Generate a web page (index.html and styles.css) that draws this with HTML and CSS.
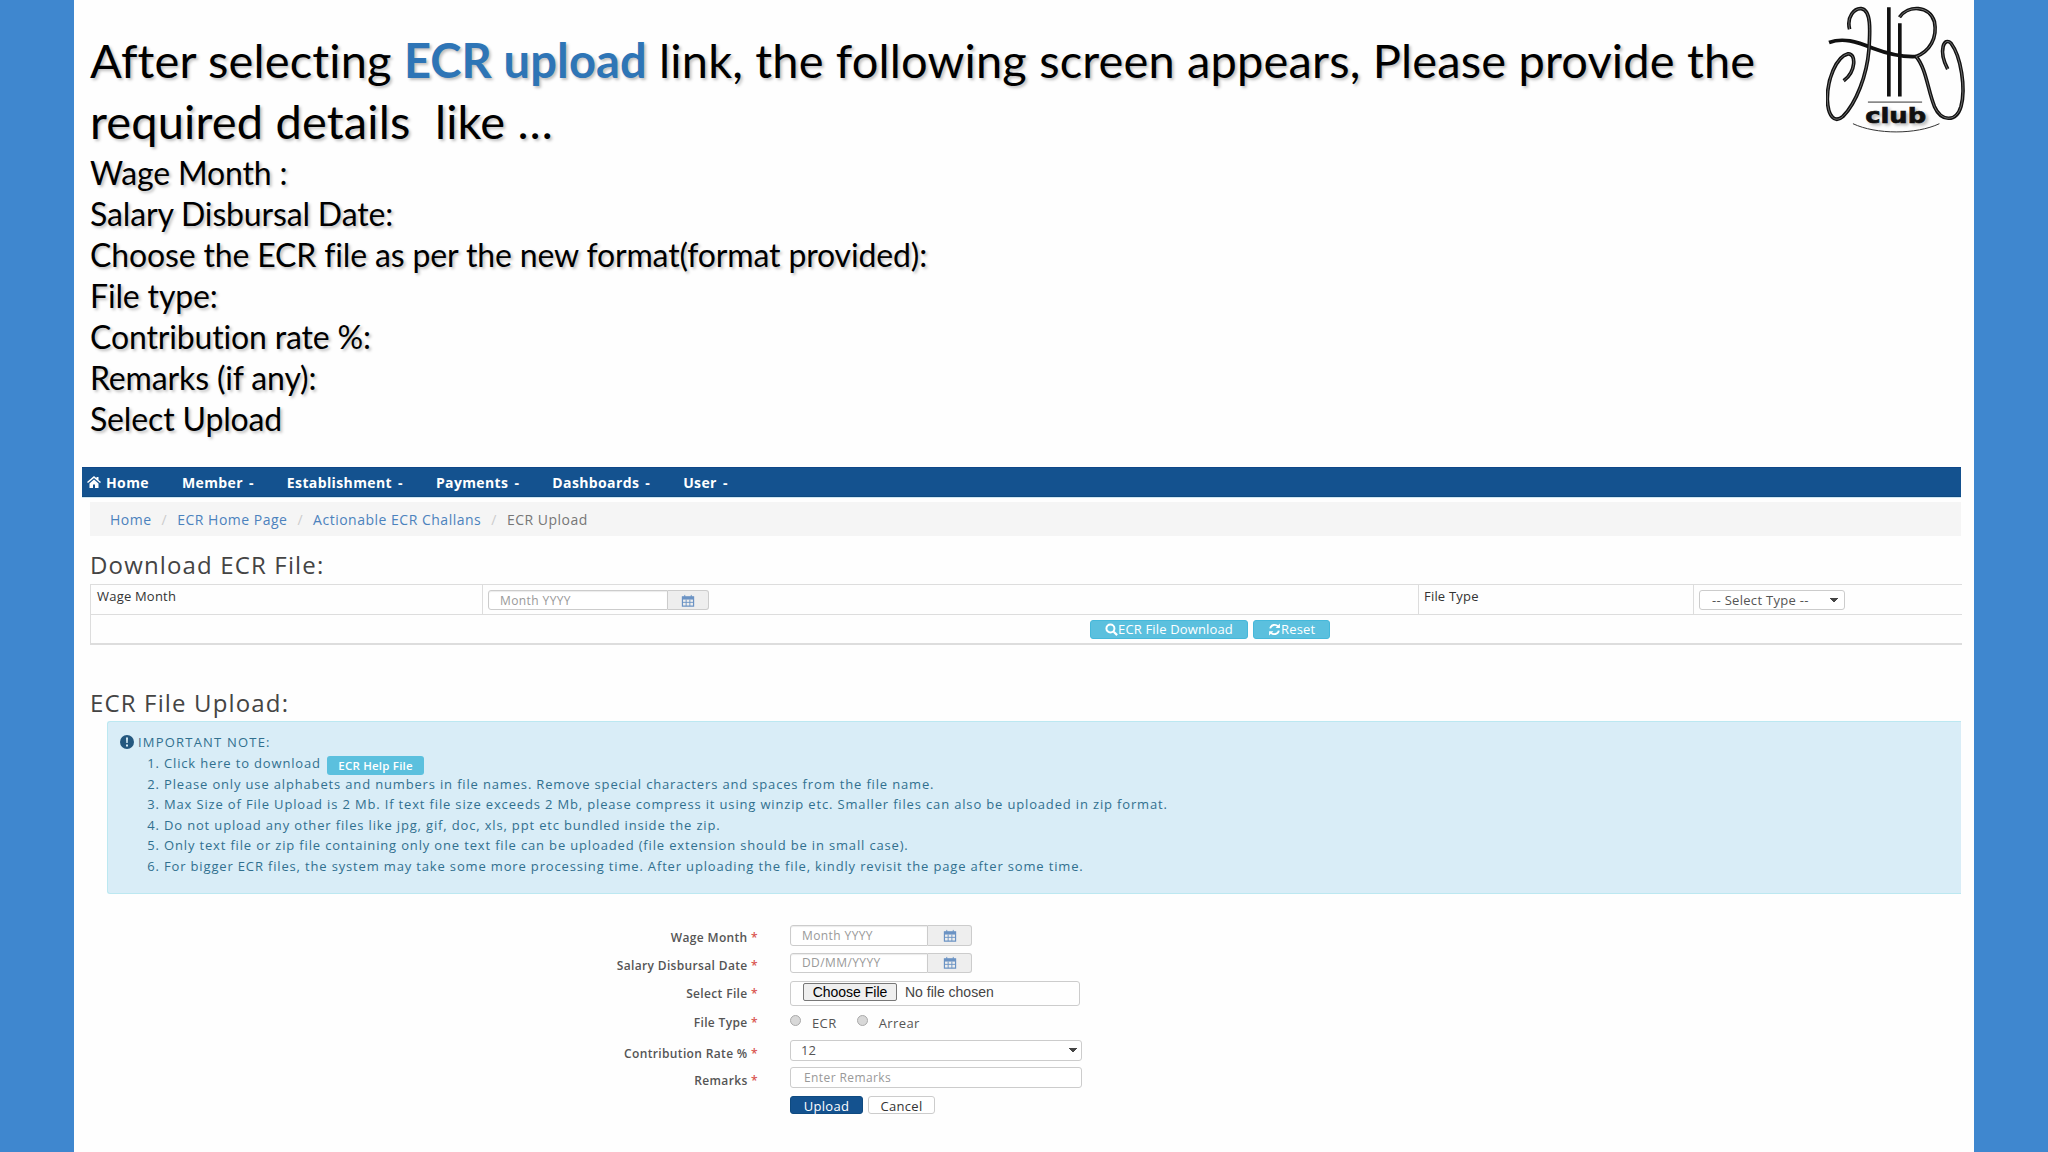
FILE: index.html
```html
<!DOCTYPE html>
<html lang="en">
<head>
  <meta charset="UTF-8" />
  <meta name="viewport" content="width=device-width, initial-scale=1.0" />
  <title>ECR upload</title>
  <link rel="stylesheet" href="styles.css">
</head>
<body>
  <svg class="sprite" width="0" height="0">
    <symbol id="cal" viewBox="0 0 14 14">
      <path d="M1 3h12v10H1z" fill="none" stroke="currentColor" stroke-width="1.3"/>
      <path d="M1 3h12v3H1z" fill="currentColor"/>
      <path d="M3.500 1v3M10.500 1v3M1 9h12M5 6v7M9 6v7" fill="none" stroke="currentColor"/>
    </symbol>
  </svg>

  <main class="slide">
    <section class="intro">
      <h1>After selecting <span class="accent">ECR upload</span> link, the following screen appears, Please provide the<br>required details&nbsp; like …</h1>
      <ul class="steps">
        <li>Wage Month :</li>
        <li>Salary Disbursal Date:</li>
        <li>Choose the ECR file as per the new format(format provided):</li>
        <li>File type:</li>
        <li>Contribution rate %:</li>
        <li>Remarks (if any):</li>
        <li>Select Upload</li>
      </ul>
      <svg class="logo" viewBox="380 15 425 385" aria-label="HR club logo">
        <g class="logo-ink">
          <path d="M450 88C440 50 465 24 485 26C515 30 512 90 508 150C502 225 470 310 430 350C405 372 385 350 383 300C382 240 410 170 445 162C470 160 470 215 432 243"/>
          <path d="M388 128C430 112 470 125 520 145C565 162 610 172 650 170"/>
          <path d="M600 52C625 15 690 15 705 65C715 115 690 155 650 170C680 205 685 270 705 320C725 365 770 370 785 320C800 265 785 170 755 130C735 110 715 150 745 208"/>
        </g>
        <g class="logo-shine">
          <path d="M450 88C440 50 465 24 485 26C515 30 512 90 508 150C502 225 470 310 430 350C405 372 385 350 383 300C382 240 410 170 445 162C470 160 470 215 432 243"/>
          <path d="M600 52C625 15 690 15 705 65C715 115 690 155 650 170C680 205 685 270 705 320C725 365 770 370 785 320C800 265 785 170 755 130C735 110 715 150 745 208"/>
        </g>
        <path class="logo-bar" d="M568 22V290M601 70V290"/>
        <path class="logo-thin" d="M505 307H668M460 372C530 405 650 405 720 372"/>
        <text class="logo-club" x="497" y="370" textLength="183" lengthAdjust="spacingAndGlyphs">club</text>
      </svg>
    </section>

    <nav class="topnav">
      <a href="#" class="nav-home">
        <svg class="ico-home" viewBox="0 0 14 12"><path d="M7 0L0 6l1 1 6-5 6 5 1-1-2.500-2V1h-2v1.200zM2.500 7.500V12H6V8.500h2V12h3.500V7.500L7 3.500z" fill="currentColor"/></svg>
        Home
      </a>
      <a href="#">Member <i>-</i></a>
      <a href="#">Establishment <i>-</i></a>
      <a href="#">Payments <i>-</i></a>
      <a href="#">Dashboards <i>-</i></a>
      <a href="#">User <i>-</i></a>
    </nav>

    <div class="crumbs">
      <a href="#">Home</a><span>/</span>
      <a href="#">ECR Home Page</a><span>/</span>
      <a href="#">Actionable ECR Challans</a><span>/</span>
      <b>ECR Upload</b>
    </div>

    <h2 class="head-download">Download ECR File:</h2>
    <table class="dl-table">
      <tr class="dl-row">
        <td class="c1">Wage Month</td>
        <td class="c2">
          <div class="group g-wide">
            <input type="text" placeholder="Month YYYY">
            <span class="addon"><svg class="ico-cal"><use href="#cal"/></svg></span>
          </div>
        </td>
        <td class="c3">File Type</td>
        <td class="c4">
          <select class="type-select"><option>-- Select Type --</option></select>
        </td>
      </tr>
      <tr>
        <td colspan="4" class="dl-actions">
          <button class="btn-info btn-dl">
            <svg class="ico-btn" viewBox="0 0 12 12"><circle cx="5" cy="5" r="3.700" fill="none" stroke="currentColor" stroke-width="1.800"/><path d="M8 8l3.200 3.200" stroke="currentColor" stroke-width="2"/></svg>ECR File Download
          </button>
          <button class="btn-info btn-reset">
            <svg class="ico-btn" viewBox="0 0 12 12"><path d="M2 5a4.200 4.200 0 0 1 7.300-1.800M10 7a4.200 4.200 0 0 1-7.300 1.800" fill="none" stroke="currentColor" stroke-width="1.700"/><path d="M11 0.500v4H7zM1 11.500v-4h4z" fill="currentColor"/></svg>Reset
          </button>
        </td>
      </tr>
    </table>

    <h2 class="head-upload">ECR File Upload:</h2>
    <div class="note">
      <p class="note-title">
        <svg class="ico-note" viewBox="0 0 14 14"><circle cx="7" cy="7" r="7" fill="#24587f"/><path d="M6 2.500h2l-.3 5.500H6.300zM6 9.500h2V11.500H6z" fill="#d9edf7"/></svg>
        IMPORTANT NOTE:
      </p>
      <ol>
        <li class="first">Click here to download <a class="help-btn" href="#">ECR Help File</a></li>
        <li>Please only use alphabets and numbers in file names. Remove special characters and spaces from the file name.</li>
        <li>Max Size of File Upload is 2 Mb. If text file size exceeds 2 Mb, please compress it using winzip etc. Smaller files can also be uploaded in zip format.</li>
        <li>Do not upload any other files like jpg, gif, doc, xls, ppt etc bundled inside the zip.</li>
        <li>Only text file or zip file containing only one text file can be uploaded (file extension should be in small case).</li>
        <li>For bigger ECR files, the system may take some more processing time. After uploading the file, kindly revisit the page after some time.</li>
      </ol>
    </div>

    <form class="upload-form">
      <div class="row r1">
        <label>Wage Month <em>*</em></label>
        <div class="group g-form">
          <input type="text" placeholder="Month YYYY">
          <span class="addon"><svg class="ico-cal"><use href="#cal"/></svg></span>
        </div>
      </div>
      <div class="row r2">
        <label>Salary Disbursal Date <em>*</em></label>
        <div class="group g-form">
          <input type="text" placeholder="DD/MM/YYYY">
          <span class="addon"><svg class="ico-cal"><use href="#cal"/></svg></span>
        </div>
      </div>
      <div class="row r3">
        <label>Select File <em>*</em></label>
        <div class="file-box"><input type="file"></div>
      </div>
      <div class="row r4">
        <label>File Type <em>*</em></label>
        <div class="radios">
          <input type="radio" name="ftype" id="ft-ecr"><span>ECR</span>
          <input type="radio" name="ftype" id="ft-arr"><span>Arrear</span>
        </div>
      </div>
      <div class="row r5">
        <label>Contribution Rate % <em>*</em></label>
        <select class="rate-select"><option>12</option></select>
      </div>
      <div class="row r6">
        <label>Remarks <em>*</em></label>
        <input class="remarks" type="text" placeholder="Enter Remarks">
      </div>
      <div class="row r7">
        <label></label>
        <div class="actions">
          <button class="btn-upload" type="button">Upload</button>
          <button class="btn-cancel" type="button">Cancel</button>
        </div>
      </div>
    </form>
  </main>
</body>
</html>
```

FILE: styles.css
```css
* {
  box-sizing: border-box;
}
html, body {
  height: 1152px;
  overflow: hidden;
}
body {
  margin: 0;
  background: #3f87cf;
  font-family: "Open Sans", sans-serif;
  color: #333;
}
.sprite {
  position: absolute;
}
.slide {
  width: 1900px;
  height: 1152px;
  margin-left: 74px;
  padding: 30px 13px 0 8px;
  background: #fefefe;
}

/* slide text */
.intro {
  position: relative;
  padding-left: 8px;
  font-family: Lato, sans-serif;
  color: #000;
  text-shadow: 2px 2px 3px rgba(0, 0, 0, .25);
}
h1 {
  margin: 0;
  font-size: 47px;
  font-weight: 400;
  line-height: 61px;
  letter-spacing: .16px;
}
.accent {
  color: #2e75b6;
  font-weight: 700;
}
.steps {
  list-style: none;
  margin: 0;
  padding: 0;
  font-size: 32px;
  line-height: 41px;
  letter-spacing: -.15px;
}
.logo {
  position: absolute;
  top: -25px;
  right: -7px;
  width: 142px;
  height: 128px;
}
.logo-ink path {
  fill: none;
  stroke: #111;
  stroke-width: 11;
}
.logo-shine path {
  fill: none;
  stroke: #fff;
  stroke-width: 1.200;
}
.logo-bar {
  fill: none;
  stroke: #111;
  stroke-width: 11;
}
.logo-thin {
  fill: none;
  stroke: #333;
  stroke-width: 3;
}
.logo-club {
  font-family: "DejaVu Sans", sans-serif;
  font-size: 62px;
  font-weight: 700;
  fill: #111;
  stroke: #111;
  stroke-width: 2;
}

/* screenshot of the portal */
.topnav {
  display: flex;
  gap: 33px;
  align-items: center;
  height: 30px;
  margin-top: 28px;
  padding-left: 5px;
  background: #14528f;
  border-top: 1px solid #0f4788;
  border-bottom: 1px solid #0f4a80;
  box-shadow: 0 1px 0 #cfe6f2;
}
.topnav a {
  color: #fff;
  font-size: 14px;
  font-weight: 700;
  text-decoration: none;
  letter-spacing: .38px;
}
.topnav i {
  font-style: normal;
  margin-left: 2px;
}
.nav-home {
  display: flex;
  align-items: center;
  gap: 5px;
}
.ico-home {
  width: 14px;
  height: 12px;
}
.crumbs {
  display: flex;
  align-items: center;
  height: 34px;
  margin: 5px 0 0 8px;
  padding-left: 20px;
  background: #f5f5f5;
  font-size: 14px;
  letter-spacing: .5px;
  color: #777;
}
.crumbs a {
  color: #4c82bd;
  text-decoration: none;
}
.crumbs span {
  margin: 0 10px;
  color: #ccc;
}
.crumbs b {
  font-weight: 400;
}
h2 {
  margin: 0 0 0 8px;
  font-size: 24px;
  font-weight: 400;
  letter-spacing: 1.150px;
  color: #444;
  line-height: 28px;
}
.head-download {
  margin-top: 15px;
}
.head-upload {
  margin-top: 44px;
}
.dl-table {
  width: 1872px;
  margin: 5px 0 0 8px;
  border-collapse: collapse;
  table-layout: fixed;
  font-size: 13px;
  letter-spacing: .2px;
}
.dl-table td {
  border-top: 1px solid #ddd;
  padding: 0;
  height: 30px;
}
.dl-table tr:last-child td {
  border-bottom: 2px solid #ddd;
  height: 29px;
}
.dl-row td {
  vertical-align: top;
}
.c1 {
  width: 392px;
  padding: 2px 0 0 6px !important;
  border-left: 1px solid #ddd;
}
.c2 {
  width: 936px;
  border-left: 1px solid #ddd;
  padding: 5px 0 0 5px !important;
}
.c3 {
  width: 275px;
  border-left: 1px solid #ddd;
  padding: 2px 0 0 5px !important;
}
.c4 {
  border-left: 1px solid #ddd;
  padding: 5px 0 0 5px !important;
}
.dl-actions {
  border-left: 1px solid #ddd;
  padding: 1px 0 0 999px !important;
  font-size: 0;
}
.group {
  display: flex;
}
.group input {
  min-width: 0;
  flex: 1;
  border: 1px solid #ccc;
  border-radius: 3px 0 0 3px;
  padding: 0 11px;
  font: 12px "Open Sans", sans-serif;
  letter-spacing: .4px;
  box-shadow: inset 0 1px 1px rgba(0, 0, 0, .08);
}
input::placeholder {
  color: #999;
}
.addon {
  display: flex;
  align-items: center;
  justify-content: center;
  width: 41px;
  background: #eee;
  border: 1px solid #ccc;
  border-left: 0;
  border-radius: 0 3px 3px 0;
  color: #6b93c4;
}
.g-wide {
  width: 221px;
  height: 20px;
}
.g-form {
  width: 182px;
  height: 21px;
}
.g-form .addon {
  width: 44px;
}
.ico-cal {
  width: 14px;
  height: 13px;
}
/* small native-looking arrow, drawn with two gradients */
.type-select, .rate-select {
  appearance: none;
  background-color: #fff;
  background-repeat: no-repeat;
  background-size: 4px 5px, 4px 5px;
  background-image: linear-gradient(45deg, transparent 50%, #444 50%), linear-gradient(-45deg, transparent 50%, #444 50%);
}
.type-select {
  width: 146px;
  height: 20px;
  padding: 0 12px;
  background-position: right 10px center, right 6px center;
  border: 1px solid #ccc;
  border-radius: 3px;
  font: 13px "Open Sans", sans-serif;
  letter-spacing: .3px;
  color: #555;
}
.btn-info {
  display: inline-flex;
  align-items: center;
  justify-content: center;
  height: 19px;
  padding: 0;
  background: #5bc0de;
  border: 1px solid #46b8da;
  border-radius: 3px;
  color: #fff;
  font: 13px "Open Sans", sans-serif;
  letter-spacing: .15px;
}
.btn-dl {
  width: 158px;
}
.btn-reset {
  width: 77px;
  margin-left: 5px;
}
.ico-btn {
  width: 13px;
  height: 13px;
  margin-right: 0;
}

/* note box */
.note {
  height: 173px;
  margin: 4px 0 0 25px;
  padding: 12px 0 0 12px;
  background: #d9edf7;
  border: 1px solid #bce8f1;
  border-right: 0;
  border-radius: 3px 0 0 3px;
  color: #31708f;
  font-size: 13px;
  letter-spacing: .84px;
}
.note-title {
  display: flex;
  align-items: center;
  gap: 4px;
  margin: 0;
  line-height: 16px;
  letter-spacing: 1.200px;
}
.ico-note {
  width: 14px;
  height: 14px;
}
.note ol {
  margin: 2px 0 0;
  padding: 0 0 0 44px;
}
.note li {
  height: 20.600px;
  line-height: 20.600px;
  padding-left: 0;
}
.note li.first {
  height: 22px;
  line-height: 22px;
}
.help-btn {
  display: inline-block;
  height: 19px;
  width: 97px;
  margin-left: 2px;
  background: #5bc0de;
  border-radius: 3px;
  color: #fff;
  font-size: 11.500px;
  letter-spacing: .2px;
  font-weight: 600;
  line-height: 20px;
  text-align: center;
  text-decoration: none;
  vertical-align: -2px;
}

/* upload form */
.upload-form {
  display: flex;
  flex-direction: column;
  gap: 7px;
  margin-top: 31px;
  font-size: 12px;
}
.row {
  display: grid;
  grid-template-columns: 676px auto;
  column-gap: 32px;
  align-items: start;
}
.row label {
  text-align: right;
  font-weight: 600;
  font-size: 12px;
  line-height: 14px;
  letter-spacing: .35px;
  color: #555;
}
.row em {
  color: #d9534f;
  font-style: normal;
}
.r1 label {
  padding-top: 6px;
}
.r2 label {
  padding-top: 6px;
}
.r3 {
  margin-top: 1px;
}
.r3 label {
  padding-top: 6px;
}
.r4 label {
  padding-top: 3px;
}
.r5 label {
  padding-top: 7px;
}
.r6 label {
  padding-top: 7px;
}
.r2 .group {
  height: 20px;
}
.file-box {
  width: 290px;
  height: 25px;
  padding: 1px 0 0 12px;
  border: 1px solid #ccc;
  border-radius: 3px;
}
.file-box input {
  font: 14px "Liberation Sans", sans-serif;
  color: #444;
}
.file-box input::file-selector-button {
  height: 18px;
  width: 94px;
  padding: 0;
  margin-right: 8px;
  font: 14px "Liberation Sans", sans-serif;
  background: #efefef;
  border: 1px solid #777;
  border-radius: 2px;
}
.radios {
  display: flex;
  align-items: center;
  height: 20px;
  color: #555;
  font-size: 13px;
  letter-spacing: .4px;
}
.radios input {
  appearance: none;
  width: 11px;
  height: 11px;
  margin: 0 11px 4px 0;
  background: #d8d8d8;
  border: 1px solid #aaa;
  border-radius: 50%;
}
.radios span {
  margin-right: 20px;
}
.rate-select {
  width: 292px;
  height: 21px;
  padding: 0 10px;
  background-position: right 8px center, right 4px center;
  border: 1px solid #ccc;
  border-radius: 3px;
  font: 13px "Open Sans", sans-serif;
  color: #555;
}
.remarks {
  width: 292px;
  height: 21px;
  padding: 0 13px;
  border: 1px solid #ccc;
  border-radius: 3px;
  font: 12px "Open Sans", sans-serif;
  letter-spacing: .4px;
}
.r6 {
  margin-top: -1px;
}
.r7 {
  margin-top: 1px;
}
.actions {
  display: flex;
  gap: 5px;
}
.btn-upload, .btn-cancel {
  height: 18px;
  padding: 0;
  border-radius: 3px;
  font: 13px "Open Sans", sans-serif;
  letter-spacing: .3px;
}
.btn-upload {
  width: 73px;
  background: #14528f;
  border: 1px solid #0f4a80;
  color: #fff;
}
.btn-cancel {
  width: 67px;
  background: #fff;
  border: 1px solid #ccc;
  color: #333;
}
```
